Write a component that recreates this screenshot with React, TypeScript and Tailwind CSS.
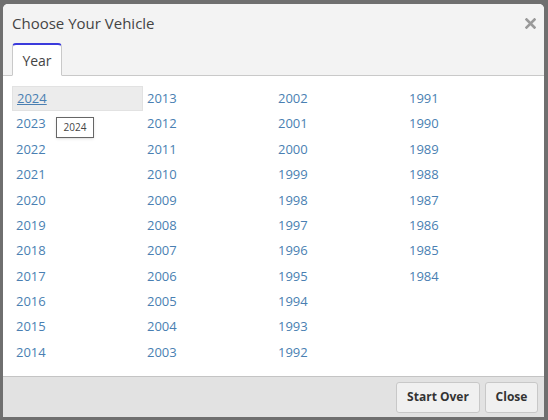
import React from "react";

const cols: number[][] = [
  [2024, 2023, 2022, 2021, 2020, 2019, 2018, 2017, 2016, 2015, 2014],
  [2013, 2012, 2011, 2010, 2009, 2008, 2007, 2006, 2005, 2004, 2003],
  [2002, 2001, 2000, 1999, 1998, 1997, 1996, 1995, 1994, 1993, 1992],
  [1991, 1990, 1989, 1988, 1987, 1986, 1985, 1984],
];

export default function App() {
  return (
    <div
      className="w-[548px] h-[420px] bg-[#6f6f6f] pt-[4px] pl-[3px] overflow-hidden"
      style={{ fontFamily: '"Open Sans", "Noto Sans", sans-serif' }}
    >
      <div className="w-[541px] h-[413px] bg-white rounded-t-[5px] flex flex-col overflow-hidden">
        <div className="relative h-[72px] bg-[#f3f3f3] border-b border-[#c9c9c9] flex flex-col">
          <div className="pl-[9px] pt-[9px] text-[15px] leading-[20px] text-[#444]">Choose Your Vehicle</div>
          <svg className="absolute right-[8px] top-[14px]" width="11" height="11" viewBox="0 0 11 11">
            <path d="M1.5 1.5 L9.5 9.5 M9.5 1.5 L1.5 9.5" stroke="#9a9a9a" strokeWidth="2.6" strokeLinecap="square" />
          </svg>
          <div className="mt-auto pl-[9px] flex">
            <div className="w-[50px] h-[33px] -mb-px bg-white border border-[#c9c9c9] border-b-white border-t-2 border-t-[#3b3bdc] rounded-t-[4px] flex items-center justify-center text-[14px] text-[#444]">
              Year
            </div>
          </div>
        </div>
        <div className="relative flex-1 pt-[10px] pl-[9px] flex">
          {cols.map((col, ci) => (
            <div key={ci} className="w-[131px] flex flex-col">
              {col.map((y, ri) => (
                <div
                  key={y}
                  className={
                    "h-[25.4px] pl-[4px] flex items-center text-[13px] text-[#4a7fb2] " +
                    (ci === 0 && ri === 0 ? "bg-[#ececec] border border-[#e2e2e2] pl-[3px]" : "")
                  }
                >
                  <span className={ci === 0 && ri === 0 ? "underline" : ""}>{y}</span>
                </div>
              ))}
            </div>
          ))}
          <div className="absolute left-[53px] top-[41px] w-[38px] h-[21px] bg-white border border-[#666] shadow-sm flex items-center justify-center text-[10px] text-[#444]">
            2024
          </div>
        </div>
        <div className="h-[41px] bg-[#e2e2e2] border-t border-[#c4c4c4] flex items-center justify-end gap-[5px] pr-[6px]">
          <button className="w-[84px] h-[31px] bg-[#f0f0f0] border border-[#c8c8c8] rounded-[3px] text-[12px] font-bold text-[#333]">
            Start Over
          </button>
          <button className="w-[53px] h-[31px] bg-[#f0f0f0] border border-[#c8c8c8] rounded-[3px] text-[12px] font-bold text-[#333]">
            Close
          </button>
        </div>
      </div>
    </div>
  );
}
